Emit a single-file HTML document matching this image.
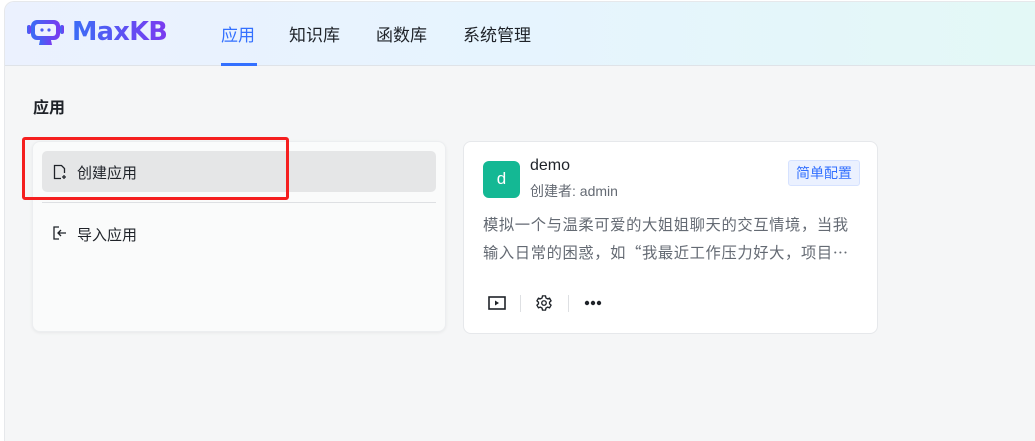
<!DOCTYPE html>
<html><head><meta charset="utf-8"><style>
*{margin:0;padding:0;box-sizing:border-box}
body{width:1035px;height:441px;overflow:hidden;background:#fff;font-family:"Liberation Sans","Noto Sans CJK SC",sans-serif;position:relative}
.wrap{position:absolute;left:4px;top:1px;right:0;bottom:0;background:#f5f6f7;border-top-left-radius:10px;border:1px solid #e6e8eb;border-right:none;border-bottom:none;overflow:hidden}
.hdr{position:absolute;left:0;top:0;right:0;height:64px;background:linear-gradient(90deg,#ebf1fe 0%,#e6f4fe 50%,#e3f8f6 100%);border-bottom:1px solid #dfe3e8}
.nav{position:absolute;top:19px;font-size:17px;color:#1f2329}
.abs{position:absolute}
.card{position:absolute;background:#fff;border-radius:8px;border:1px solid #e6e8eb}
</style></head><body>
<div class="wrap">
 <div class="hdr">
  <svg class="abs" style="left:22px;top:17px" width="38" height="30" viewBox="0 0 38 30">
   <defs><linearGradient id="g" x1="0" x2="1"><stop offset="0" stop-color="#3a6cf5"/><stop offset="1" stop-color="#7a3af0"/></linearGradient></defs>
   <rect x="0" y="6" width="4" height="9" rx="2" fill="url(#g)"/><rect x="33" y="6" width="4" height="9" rx="2" fill="url(#g)"/>
   <rect x="4" y="1" width="29" height="20" rx="6" fill="url(#g)"/>
   <rect x="8" y="5" width="21" height="12" rx="3" fill="#eef2fe"/>
   <circle cx="15" cy="11" r="1.6" fill="#4b5cf2"/><circle cx="22" cy="11" r="1.6" fill="#4b5cf2"/>
   <path d="M13 21 L12 26 L25 26 L24 21Z" fill="url(#g)"/>
  </svg>
  <div class="abs" style="left:67px;top:15px;font-size:25.5px;font-weight:bold;font-family:'DejaVu Sans',sans-serif;background:linear-gradient(90deg,#3b6ef6,#7b3af0);-webkit-background-clip:text;color:transparent;letter-spacing:-0.6px">MaxKB</div>
  <div class="nav" style="left:216px;color:#3370ff">应用</div>
  <div class="abs" style="left:216px;top:61px;width:36px;height:3px;background:#3370ff"></div>
  <div class="nav" style="left:284px">知识库</div>
  <div class="nav" style="left:371px">函数库</div>
  <div class="nav" style="left:458px">系统管理</div>
 </div>
 <div class="abs" style="left:28px;top:92px;font-size:16px;font-weight:bold;color:#1f2329">应用</div>
 <div class="card" style="left:27px;top:139px;width:414px;height:191px;background:#fafbfb;border-color:#eceef0;box-shadow:0 1px 3px rgba(0,0,0,0.06)">
  <div class="abs" style="left:9px;top:9px;width:394px;height:41px;background:#e5e6e7;border-radius:5px"></div>
  <svg class="abs" style="left:20px;top:22px" width="14" height="16" viewBox="0 0 14 16" fill="none" stroke="#1f2329" stroke-width="1.3"><path d="M8 14.5H1.5V1.5H8.5L11.5 4.5V9"/><path d="M11 11v4M9 13h4"/></svg>
  <div class="abs" style="left:44px;top:20px;font-size:15px;color:#1f2329">创建应用</div>
  <div class="abs" style="left:9px;top:60px;width:394px;height:1px;background:#dee0e3"></div>
  <svg class="abs" style="left:20px;top:84px" width="14" height="14" viewBox="0 0 14 14" fill="none" stroke="#1f2329" stroke-width="1.3"><path d="M6 1H1V13H6"/><path d="M13 7H5M8 4L5 7L8 10"/></svg>
  <div class="abs" style="left:44px;top:82px;font-size:15px;color:#1f2329">导入应用</div>
 </div>
 <div class="abs" style="left:17px;top:135px;width:267px;height:63px;border:3px solid #f51f1f;border-radius:3px"></div>
 <div class="card" style="left:458px;top:139px;width:415px;height:193px">
  <div class="abs" style="left:19px;top:19px;width:37px;height:37px;border-radius:6px;background:#14b894;color:#fff;font-size:17px;text-align:center;line-height:36px">d</div>
  <div class="abs" style="left:66px;top:15px;font-size:16px;color:#1f2329">demo</div>
  <div class="abs" style="left:66px;top:39px;font-size:14px;color:#646a73">创建者: admin</div>
  <div class="abs" style="left:324px;top:18px;width:72px;height:26px;background:#ebf1ff;border:1px solid #d6e2ff;border-radius:3px;color:#3370ff;font-size:14px;text-align:center;line-height:24px">简单配置</div>
  <div class="abs" style="left:19px;top:68px;width:400px;font-size:15.3px;letter-spacing:0.6px;line-height:28px;color:#646a73;white-space:nowrap;font-family:'Noto Sans CJK SC',sans-serif">模拟一个与温柔可爱的大姐姐聊天的交互情境，当我<br>输入日常的困惑，如“我最近工作压力好大，项目…</div>
  <svg class="abs" style="left:24px;top:154px" width="18" height="14" viewBox="0 0 18 14" fill="none" stroke="#1f2329" stroke-width="1.6"><rect x="1" y="1" width="16" height="12"/><path d="M7 4.5v5l4-2.5z" fill="#1f2329" stroke="none"/></svg>
  <div class="abs" style="left:56px;top:153px;width:1px;height:17px;background:#dee0e3"></div>
  <svg class="abs" style="left:71px;top:152px" width="18" height="18" viewBox="0 0 24 24" fill="none" stroke="#1f2329" stroke-width="1.8"><circle cx="12" cy="12" r="3"/><path d="M10 2.5h4l.6 2.7 2.2 1.3 2.6-.9 2 3.5-2 1.8v2.2l2 1.8-2 3.5-2.6-.9-2.2 1.3-.6 2.7h-4l-.6-2.7-2.2-1.3-2.6.9-2-3.5 2-1.8v-2.2l-2-1.8 2-3.5 2.6.9 2.2-1.3z"/></svg>
  <div class="abs" style="left:104px;top:153px;width:1px;height:17px;background:#dee0e3"></div>
  <svg class="abs" style="left:120px;top:158px" width="18" height="6" viewBox="0 0 18 6" fill="#1f2329"><circle cx="3" cy="3" r="2.2"/><circle cx="9" cy="3" r="2.2"/><circle cx="15" cy="3" r="2.2"/></svg>
 </div>
</div>
</body></html>
